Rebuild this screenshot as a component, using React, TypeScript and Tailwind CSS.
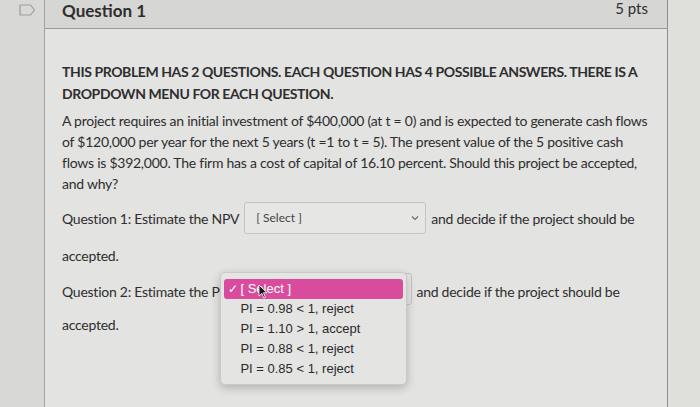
import React from "react";

function Chevron() {
  return (
    <svg width="8" height="6" viewBox="0 0 8 6" className="shrink-0">
      <path d="M1 1.5 L4 4.5 L7 1.5" fill="none" stroke="#6b6b6b" strokeWidth="1.2" />
    </svg>
  );
}

function Cursor() {
  return (
    <svg width="10" height="15" viewBox="0 0 10 15" className="absolute left-[34px] top-[5px]">
      <path d="M1 1 L1 12 L3.8 9.4 L5.8 14 L7.4 13.3 L5.4 8.8 L9 8.8 Z" fill="#1a1a1a" stroke="#fff" strokeWidth="0.8" />
    </svg>
  );
}

const options = [
  "PI = 0.98 < 1, reject",
  "PI = 1.10 > 1, accept",
  "PI = 0.88 < 1, reject",
  "PI = 0.85 < 1, reject",
];

export default function App() {
  return (
    <div className="w-[700px] h-[407px] overflow-hidden flex bg-[#dddddb] text-[#2e2e2e] font-['Lato','Liberation_Sans',sans-serif]">
      {/* left rail */}
      <div className="w-[45px] shrink-0 border-r border-[#a2a2a0] bg-[#d8d8d6] pt-[4px] pl-[19px]">
        <svg width="17" height="12" viewBox="0 0 17 12">
          <path d="M1 1 H11.5 L15.5 6 L11.5 11 H1 Z" fill="none" stroke="#9c9c9a" strokeWidth="1.2" strokeLinejoin="round" />
        </svg>
      </div>

      {/* question card */}
      <div className="w-[623px] shrink-0 border-r border-[#8e8e8b] bg-[#e3e3e1] flex flex-col">
        <div className="h-[29px] shrink-0 border-b border-[#9b9b99] bg-[#d6d6d4] flex items-start justify-between pl-[17px] pr-[19px]">
          <span className="text-[17px] font-bold leading-[22px]">Question 1</span>
          <span className="text-[15px] leading-[15px] mt-[1px]">5 pts</span>
        </div>

        <div className="pl-[17px] pt-[32px] text-[14px] tracking-[-0.25px] whitespace-nowrap">
          <p className="font-bold leading-[22px] tracking-[-0.4px]">
            THIS PROBLEM HAS 2 QUESTIONS. EACH QUESTION HAS 4 POSSIBLE ANSWERS. THERE IS A
            <br />
            DROPDOWN MENU FOR EACH QUESTION.
          </p>
          <p className="mt-[5px] leading-[21px]">
            A project requires an initial investment of $400,000 (at t = 0) and is expected to generate cash flows
            <br />
            of $120,000 per year for the next 5 years (t =1 to t = 5). The present value of the 5 positive cash
            <br />
            flows is $392,000. The firm has a cost of capital of 16.10 percent. Should this project be accepted,
            <br />
            and why?
          </p>

          {/* question 1 */}
          <div className="mt-[5px] h-[38px] flex items-center">
            <span>Question 1: Estimate the NPV</span>
            <div className="ml-[5px] w-[182px] h-[32px] rounded-[3px] border border-[#c4c4c2] bg-[#e6e6e4] flex items-center justify-between pl-[11px] pr-[6px]">
              <span className="text-[12px] text-[#444] tracking-normal">[ Select ]</span>
              <Chevron />
            </div>
            <span className="ml-[5px]">and decide if the project should be</span>
          </div>
          <p className="mt-[8px] leading-[22px]">accepted.</p>

          {/* question 2 */}
          <div className="mt-[5px] h-[38px] flex items-center">
            <span>Question 2: Estimate the PI</span>
            <div className="relative ml-[5px] w-[184px] h-[32px] -mt-[5px] rounded-[3px] border border-[#c4c4c2] bg-[#e6e6e4] flex items-center justify-end pr-[4px]">
              <Chevron />
              <div className="absolute left-[-9px] top-[-2px] w-[187px] pt-[6px] pb-[5px] px-[3px] rounded-[5px] border border-[#c9c9c7] bg-[#e4e4e2] shadow-[0_3px_10px_rgba(0,0,0,0.22)] font-['Liberation_Sans',sans-serif] text-[13px] tracking-normal text-[#2a2a2a] z-10">
                <div className="relative h-[20px] rounded-[3px] bg-[#d94b9d] text-white flex items-center">
                  <span className="w-[16px] pl-[4px] text-[12px]">✓</span>
                  <span>[ Select ]</span>
                  <Cursor />
                </div>
                {options.map((o) => (
                  <div key={o} className="h-[20px] flex items-center pl-[16px]">
                    {o}
                  </div>
                ))}
              </div>
            </div>
            <span className="ml-[4px]">and decide if the project should be</span>
          </div>
          <p className="mt-[4px] leading-[22px]">accepted.</p>
        </div>
      </div>

      <div className="flex-1 bg-[#dfdfdc]" />
    </div>
  );
}
